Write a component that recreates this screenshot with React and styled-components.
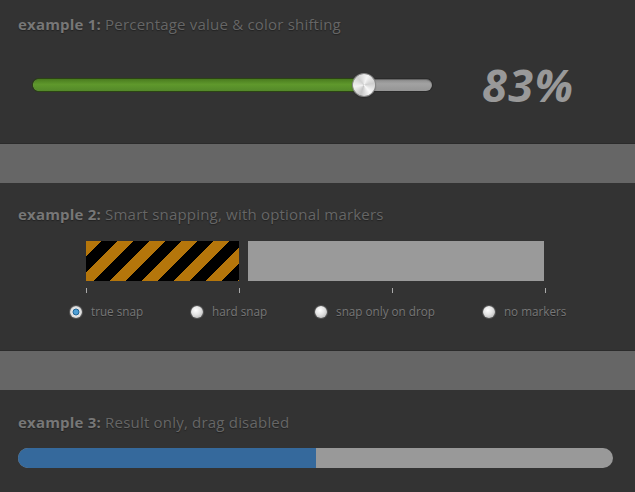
import React from 'react'
import styled, { createGlobalStyle } from 'styled-components'

const Global = createGlobalStyle`
  html, body { margin: 0; padding: 0; background: #333; }
  body { font-family: "Open Sans", "DejaVu Sans", sans-serif; }
`

const Page = styled.div`
  width: 635px;
  height: 492px;
  background: #333;
  overflow: hidden;
`

const Section = styled.div`
  height: ${p => p.h}px;
  box-sizing: border-box;
  padding: ${p => p.top}px 22px 0 18px;
`

const Title = styled.div`
  font-size: 15px;
  letter-spacing: 0.2px;
  line-height: 20px;
  color: #666;
  text-shadow: 0 1px 1px #222;
  white-space: nowrap;
  b { color: #777; font-weight: 700; }
`

const Band = styled.div`
  height: 40px;
  background: #666;
  border-top: 1px solid #2b2b2b;
  box-sizing: border-box;
`

const SliderRow = styled.div`
  display: flex;
  align-items: center;
  height: 48px;
  margin-top: 27px;
  padding-left: 15px;
`

const Track = styled.div`
  position: relative;
  width: 399px;
  height: 12px;
  border-radius: 7px;
  background: linear-gradient(#8a8a8a, #a2a2a2 40%, #959595);
  box-shadow: 0 0 0 1px #2a2a2a, inset 0 1px 1px rgba(0,0,0,0.3);
`

const Fill = styled.div`
  height: 100%;
  border-radius: 7px 0 0 7px;
  background: linear-gradient(#4a7c1f, #5f982c 45%, #54892a);
  box-shadow: 0 0 0 1px #2c4414;
`

const Knob = styled.div`
  position: absolute;
  top: 50%;
  width: 22px;
  height: 22px;
  margin: -11px 0 0 -11px;
  border-radius: 50%;
  background: conic-gradient(from 20deg, #f4f4f4, #cfcfcf, #fafafa, #c4c4c4, #f2f2f2, #d0d0d0, #f4f4f4);
  box-shadow: 0 0 0 1px #888, 0 1px 2px rgba(0,0,0,0.6);
`

const Percent = styled.div`
  margin-left: 50px;
  font-size: 45px;
  font-weight: 700;
  font-style: italic;
  color: #999;
  letter-spacing: 1.5px;
  line-height: 48px;
`

const SnapBars = styled.div`
  display: flex;
  gap: 9px;
  margin: 17px 0 0 68px;
`

const Seg = styled.div`
  width: ${p => p.w}px;
  height: 40px;
  background: ${p => p.striped
    ? 'repeating-linear-gradient(135deg, #b5760b 0 11px, #000 11px 22.6px)'
    : '#9a9a9a'};
`

const Ticks = styled.div`
  display: flex;
  justify-content: space-between;
  width: 460px;
  height: 5px;
  margin: 7px 0 0 68px;
`

const Tick = styled.span`
  width: 1px;
  height: 5px;
  background: #aaa;
`

const Options = styled.div`
  display: flex;
  gap: 48px;
  margin: 11px 0 0 52px;
`

const Option = styled.label`
  display: flex;
  align-items: center;
  gap: 9px;
  font-size: 11.7px;
  color: #777;
  line-height: 14px;
  text-shadow: 0 1px 0 #222;
`

const Radio = styled.span`
  width: 12px;
  height: 12px;
  border-radius: 50%;
  margin-top: 2px;
  box-sizing: border-box;
  background: ${p => p.on
    ? 'radial-gradient(circle at 50% 50%, #4fa0d6 0 2px, #1d5f8f 3px, #e8e8e8 3.8px, #bdbdbd 100%)'
    : 'radial-gradient(circle at 40% 35%, #ffffff, #e2e2e2 45%, #a9a9a9 100%)'};
  box-shadow: 0 0 0 1px #555;
`

const ResultBar = styled.div`
  height: 20px;
  margin-top: 16px;
  border-radius: 10px;
  background: #999;
  overflow: hidden;
`

const ResultFill = styled.div`
  height: 100%;
  background: #35699c;
`

const options = ['true snap', 'hard snap', 'snap only on drop', 'no markers']

export default function App() {
  const value = 83
  return (
    <>
      <Global />
      <Page>
        <Section h={143} top={14}>
          <Title><b>example 1:</b> Percentage value &amp; color shifting</Title>
          <SliderRow>
            <Track>
              <Fill style={{ width: `${value}%` }} />
              <Knob style={{ left: `${value}%` }} />
            </Track>
            <Percent>{value}%</Percent>
          </SliderRow>
        </Section>
        <Band />
        <Section h={167} top={21}>
          <Title><b>example 2:</b> Smart snapping, with optional markers</Title>
          <SnapBars>
            <Seg striped w={153} />
            <Seg w={296} />
          </SnapBars>
          <Ticks>
            <Tick /><Tick /><Tick /><Tick />
          </Ticks>
          <Options>
            {options.map((o, i) => (
              <Option key={o}><Radio on={i === 0} />{o}</Option>
            ))}
          </Options>
        </Section>
        <Band />
        <Section h={102} top={22}>
          <Title><b>example 3:</b> Result only, drag disabled</Title>
          <ResultBar>
            <ResultFill style={{ width: '50%' }} />
          </ResultBar>
        </Section>
      </Page>
    </>
  )
}
